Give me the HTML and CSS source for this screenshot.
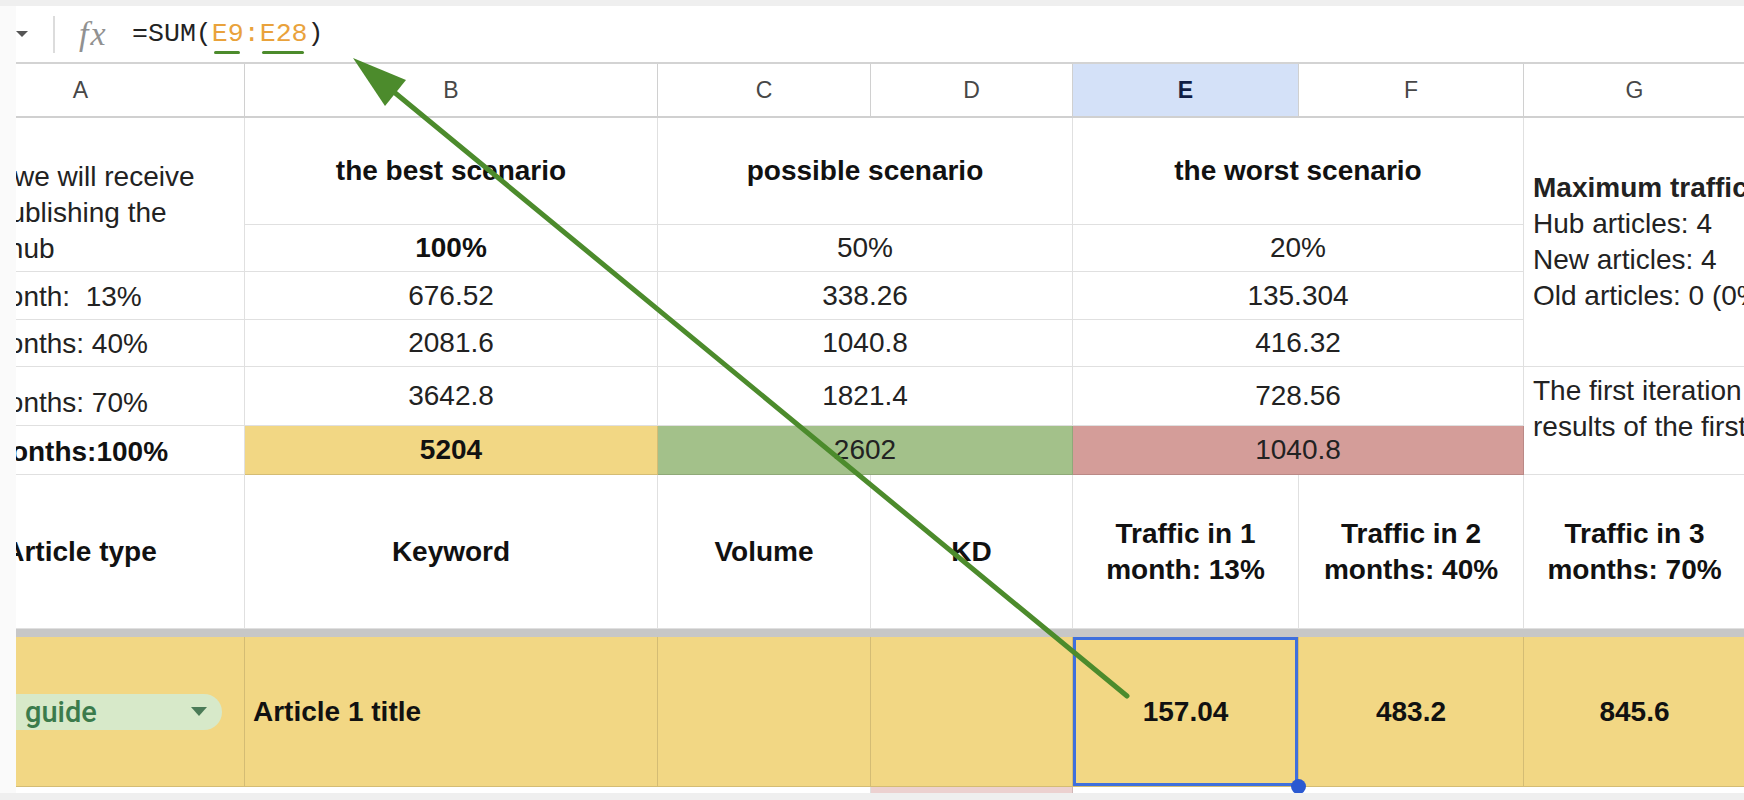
FILE: index.html
```html
<!DOCTYPE html>
<html lang="en">

<head>
    <meta charset="UTF-8">
    <meta name="viewport" content="width=device-width, initial-scale=1.0">
    <title>Traffic forecast</title>
    <link rel="stylesheet" href="styles.css">
</head>

<body>
    <div class="app">
        <div class="formula-bar">
            <span class="caret"></span>
            <span class="bar-divider"></span>
            <span class="fx">fx</span>
            <span class="formula">=SUM(<span class="ref ref-u">E9</span><span class="ref">:</span><span class="ref ref-u">E28</span>)</span>
        </div>

        <div class="sheet">
            <div class="grid">
                <div class="c hd">A</div>
                <div class="c hd">B</div>
                <div class="c hd">C</div>
                <div class="c hd">D</div>
                <div class="c hd active">E</div>
                <div class="c hd">F</div>
                <div class="c hd">G</div>
                <div class="c hd"></div>

                <div class="c label tall2"><div>Traffic we will receive<br>after publishing the<br>entire hub</div></div>
                <div class="c b">the best scenario</div>
                <div class="c b wide">possible scenario</div>
                <div class="c b wide">the worst scenario</div>
                <div class="c note wide tall4"><div><b>Maximum traffic</b><br>Hub articles: 4<br>New articles: 4<br>Old articles: 0 (0%)</div></div>

                <div class="c b">100%</div>
                <div class="c wide">50%</div>
                <div class="c wide">20%</div>

                <div class="c label">In 1 month:&nbsp; 13%</div>
                <div class="c">676.52</div>
                <div class="c wide">338.26</div>
                <div class="c wide">135.304</div>

                <div class="c label">In 2 months: 40%</div>
                <div class="c">2081.6</div>
                <div class="c wide">1040.8</div>
                <div class="c wide">416.32</div>

                <div class="c label">In 3 months: 70%</div>
                <div class="c">3642.8</div>
                <div class="c wide">1821.4</div>
                <div class="c wide">728.56</div>
                <div class="c note top wide tall2"><div>The first iteration shows the<br>results of the first month</div></div>

                <div class="c label b">In 4 months:100%</div>
                <div class="c b yellow">5204</div>
                <div class="c wide green">2602</div>
                <div class="c wide red">1040.8</div>

                <div class="c b">Article type</div>
                <div class="c b">Keyword</div>
                <div class="c b">Volume</div>
                <div class="c b">KD</div>
                <div class="c b"><div>Traffic in 1<br>month: 13%</div></div>
                <div class="c b"><div>Traffic in 2<br>months: 40%</div></div>
                <div class="c b"><div>Traffic in 3<br>months: 70%</div></div>
                <div class="c"></div>

                <div class="freeze"></div>

                <div class="c yellow chip-cell">
                    <span class="chip">guide<span class="chip-caret"></span></span>
                </div>
                <div class="c b yellow title">Article 1 title</div>
                <div class="c yellow"></div>
                <div class="c yellow"></div>
                <div class="c b yellow selected">157.04</div>
                <div class="c b yellow">483.2</div>
                <div class="c b yellow">845.6</div>
                <div class="c yellow"></div>

                <div class="c tail span3"></div>
                <div class="c tail pink"></div>
                <div class="c tail span4"></div>
            </div>
        </div>
    </div>

    <svg class="arrow" width="1744" height="800" viewBox="0 0 1744 800">
        <line x1="1127" y1="696" x2="394" y2="92" stroke="#4c8b2c" stroke-width="5" stroke-linecap="round" />
        <polygon points="353,58 385,106 406,80" fill="#4c8b2c" />
    </svg>
</body>

</html>
```

FILE: styles.css
```css
* {
    box-sizing: border-box;
}

html,
body {
    margin: 0;
    padding: 0;
}

body {
    position: relative;
    width: 1744px;
    height: 800px;
    overflow: hidden;
    background-color: #efefef;
    font-family: "Liberation Sans", Arial, sans-serif;
    color: #222;
}

.app {
    margin-top: 6px;
    height: 787px;
    border-left: 16px solid #fafafa;
    background-color: #fff;
}

.formula-bar {
    height: 58px;
    display: flex;
    align-items: center;
    border-bottom: 2px solid #d3d3d3;
}

.caret {
    border-top: 6px solid #555;
    border-left: 6px solid transparent;
    border-right: 6px solid transparent;
}

.bar-divider {
    width: 2px;
    height: 37px;
    margin-left: 25px;
    background-color: #dcdcdc;
}

.fx {
    width: 31px;
    margin-left: 24px;
    font-family: "Liberation Serif", serif;
    font-style: italic;
    font-size: 34px;
    letter-spacing: 2px;
    color: #919191;
}

.formula {
    margin-left: 22px;
    font-family: "Liberation Mono", monospace;
    font-size: 26.6px;
    color: #222;
}

.ref {
    color: #e9a23b;
}

.ref-u {
    position: relative;
}

.ref-u::after {
    content: "";
    position: absolute;
    left: 2px;
    right: 4px;
    bottom: -5px;
    height: 3px;
    border-radius: 2px;
    background-color: #4c8b2c;
}

.sheet {
    width: 1728px;
    overflow: hidden;
}

.grid {
    display: grid;
    margin-left: -99px;
    grid-template-columns: 328px 413px 213px 202px 226px 225px 222px 300px;
    grid-template-rows: 54px 107px 47px 48px 47px 59px 49px 154px 8px 150px 6px;
}

.c {
    display: flex;
    align-items: center;
    justify-content: center;
    text-align: center;
    border-right: 1px solid rgba(0, 0, 0, 0.12);
    border-bottom: 1px solid rgba(0, 0, 0, 0.12);
    font-size: 28px;
    line-height: 36px;
    white-space: nowrap;
    overflow: hidden;
}

.hd {
    font-size: 23px;
    color: #474747;
    border-right-color: #d0d0d0;
    border-bottom: 2px solid #d0d0d0;
}

.hd.active {
    background-color: #d4e1f8;
    color: #0f1e45;
    font-weight: bold;
}

.b {
    font-weight: bold;
    color: #111;
}

.wide {
    grid-column: span 2;
}

.span3 {
    grid-column: span 3;
}

.span4 {
    grid-column: span 4;
}

.tall2 {
    grid-row: span 2;
}

.tall4 {
    grid-row: span 4;
}

.label {
    justify-content: flex-start;
    align-items: flex-end;
    text-align: left;
    padding: 0 0 4px 13px;
}

.note {
    justify-content: flex-start;
    text-align: left;
    padding-left: 9px;
}

.note.top {
    align-items: flex-start;
    padding-top: 6px;
}

.yellow {
    background-color: #f2d784;
}

.green {
    background-color: #a3c18a;
}

.red {
    background-color: #d49d99;
}

.pink {
    background-color: #ecd1d0;
}

.freeze {
    grid-column: 1 / -1;
    background-color: #c7c7c7;
}

.title {
    justify-content: flex-start;
    padding-left: 8px;
}

.chip-cell {
    justify-content: flex-start;
}

.chip {
    display: flex;
    align-items: center;
    justify-content: space-between;
    width: 232px;
    height: 36px;
    margin-left: 73px;
    padding: 0 15px 0 35px;
    border-radius: 18px;
    background-color: #d7e9c9;
    color: #3b7b4c;
    font-family: Roboto, "Liberation Sans", sans-serif;
    font-weight: 500;
    font-size: 29px;
}

.chip-caret {
    border-top: 9px solid #4b7b57;
    border-left: 8px solid transparent;
    border-right: 8px solid transparent;
}

.selected {
    position: relative;
    overflow: visible;
    box-shadow: inset 0 0 0 3px #3f6fdc;
}

.selected::after {
    content: "";
    position: absolute;
    right: -8px;
    bottom: -8px;
    width: 15px;
    height: 15px;
    border-radius: 50%;
    background-color: #2b59d1;
    z-index: 2;
}

.tail {
    border-bottom: none;
}

.arrow {
    position: absolute;
    top: 0;
    left: 0;
    pointer-events: none;
}
```
